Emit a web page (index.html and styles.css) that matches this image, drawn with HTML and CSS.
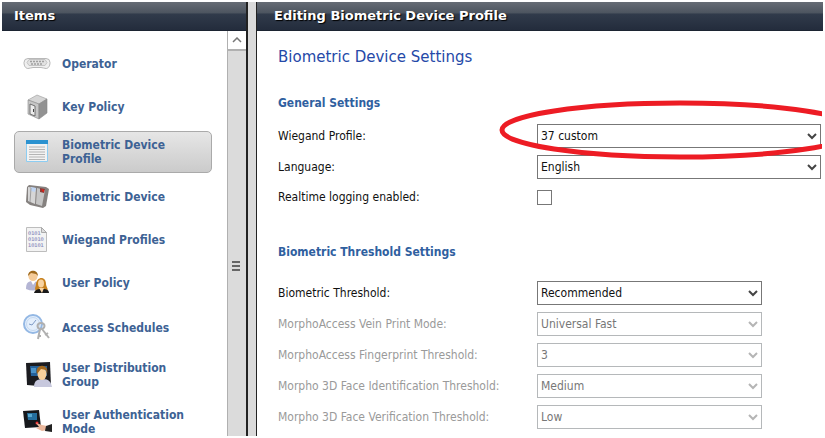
FILE: index.html
```html
<!DOCTYPE html>
<html lang="en">
<head>
  <meta charset="UTF-8">
  <meta name="viewport" content="width=device-width, initial-scale=1.0">
  <title>Editing Biometric Device Profile</title>
  <link rel="stylesheet" href="styles.css">
</head>
<body>
  <div class="app">
    <aside class="sidebar">
      <h2 class="bar">Items</h2>
      <div class="sidebar-body">
        <nav class="items">
          <a class="item" href="#">
            <svg class="icon" viewBox="0 0 30 30">
              <path d="M6 9.500h18q4 0 4 4c0 4-2 6-4 6-2 0-3-1-5-1h-8c-2 0-3 1-5 1-2 0-4-2-4-6q0-4 4-4z" fill="#f0f0f0" stroke="#b8b8b8"/>
              <path d="M7 10.500h16l2 3-2 3H7l-2-3z" fill="#e2e2e2" stroke="#c4c4c4"/>
              <path d="M8 12.500h14M9 15h12" stroke="#a0a0a0" stroke-width="1.500" stroke-dasharray="2 1"/>
            </svg>
            <span>Operator</span>
          </a>
          <a class="item" href="#">
            <svg class="icon" viewBox="0 0 30 30">
              <path d="M6 8l9-5 10 4-8 5z" fill="#d5d5d5" stroke="#999" stroke-width=".6"/>
              <path d="M6 8l11 4v15L6 22z" fill="#c6c6c6" stroke="#888" stroke-width=".6"/>
              <path d="M25 7l-8 5v15l8-6z" fill="#929292" stroke="#888" stroke-width=".6"/>
              <path d="M8 12l5 2v10l-5-2z" fill="#ececec" stroke="#555" stroke-width=".8"/>
              <path d="M11.500 17v3" stroke="#444"/>
            </svg>
            <span>Key Policy</span>
          </a>
          <a class="item selected tall" href="#">
            <svg class="icon" viewBox="0 0 30 30">
              <path d="M4.500 3.500h21v21h-21z" fill="#f2f2f2" stroke="#8dcdf2"/>
              <path d="M4 3h22v4H4z" fill="#2b92d0"/>
              <path d="M7 10h16M7 12.500h16M7 15h16M7 17.500h16M7 20h16M7 22.500h16" stroke="#b4b4b4"/>
            </svg>
            <span>Biometric Device Profile</span>
          </a>
          <a class="item" href="#">
            <svg class="icon" viewBox="0 0 30 30">
              <path d="M7 3l17 2 3 2-3 17-3 2-13-3-4-3 1-15z" fill="#85817f"/>
              <path d="M6 5l8 1-1 16-7-3z" fill="#d6d6d6"/>
              <path d="M15 6l8 2-3 16-6-2z" fill="#c6c6c6"/>
              <path d="M9 5l5 1-1 4-4-1z" fill="#bfd5f4"/>
              <path d="M18 6l5 1-1 4-4-1z" fill="#8d3a35"/>
              <path d="M20 7l2 1v2l-2-1z" fill="#e02018"/>
              <path d="M9 6L8 20" stroke="#a0a0a0" fill="none"/>
            </svg>
            <span>Biometric Device</span>
          </a>
          <a class="item" href="#">
            <svg class="icon" viewBox="0 0 30 30">
              <path d="M4.500 2.500h15l5 5v19h-20z" fill="#f3f3f3" stroke="#bdbdbd"/>
              <path d="M19.500 2.500v5h5z" fill="#ddd" stroke="#aaa"/>
              <g class="digits">
                <text x="6" y="10">0101</text>
                <text x="6" y="16">01010</text>
                <text x="6" y="22">10101</text>
              </g>
            </svg>
            <span>Wiegand Profiles</span>
          </a>
          <a class="item" href="#">
            <svg class="icon" viewBox="0 0 30 30">
              <path d="M4 21c0-6 2-8 7-8s7 3 7 8q-7 3-14 0z" fill="#b4b5d4"/>
              <path d="M9 13l2 4 3-4z" fill="#fff"/>
              <circle cx="11" cy="8.500" r="4.500" fill="#f5cb98"/>
              <path d="M6 8c0-7 10-7 10 0l-2-2-5-1-2 2z" fill="#a06a1c"/>
              <path d="M14 23c-2-3 0-4 0-7 1-8 10-8 10 0 0 3 3 5 1 7z" fill="#c8821f"/>
              <ellipse cx="19" cy="15.500" rx="3" ry="4" fill="#f8d3a2"/>
              <path d="M12 25c1-4 5-4 8-4s7 0 7 4z" fill="#191919"/>
              <path d="M17 20h5l-2 5z" fill="#f8d3a2"/>
            </svg>
            <span>User Policy</span>
          </a>
          <a class="item tall" href="#">
            <svg class="icon" viewBox="0 0 30 30">
              <circle cx="11" cy="11" r="9" fill="#e4effc" stroke="#94b8e4" stroke-width="2"/>
              <circle cx="11" cy="11" r="6.500" fill="none" stroke="#c4d8f0"/>
              <path d="M14 7l-4 5-3-1" fill="none" stroke="#7f9bc6"/>
              <g fill="none" stroke="#b0b0b0" stroke-width="2">
                <ellipse cx="19" cy="13" rx="3.500" ry="3"/>
                <path d="M18 16l-2 10M16 23h3M20 16l7 9M23 22l3-2"/>
              </g>
            </svg>
            <span>Access Schedules</span>
          </a>
          <a class="item tall" href="#">
            <svg class="icon" viewBox="0 0 30 30">
              <path d="M4 3l24-1 1 24-1 1-23-2z" fill="#1b1c20"/>
              <path d="M8 6h17v10H9z" fill="#24619a"/>
              <path d="M9 8h5v5H9z" fill="#4b93c8"/>
              <path d="M12 27c0-6 3-8 9-8s8 3 9 8z" fill="#c7c8dd"/>
              <ellipse cx="20" cy="14" rx="4.500" ry="6" fill="#f6d09c"/>
              <path d="M15 14c-3-11 13-11 10 0l-1-4-5-1z" fill="#a5691d"/>
            </svg>
            <span>User Distribution Group</span>
          </a>
          <a class="item tall" href="#">
            <svg class="icon" viewBox="0 0 30 30">
              <path d="M1 4l16-1 2 17-16 1z" fill="#16181b"/>
              <path d="M5 6h10v7H6z" fill="#246e9d"/>
              <path d="M6 7h4v3H6z" fill="#58a9cf"/>
              <circle cx="15" cy="16" r="1.500" fill="#e33"/>
              <path d="M14 16l6 2 5 1v4l-5 1-6-3 3-1z" fill="#eab79c"/>
              <path d="M24 19l6-2v8l-7-1z" fill="#222"/>
            </svg>
            <span>User Authentication Mode</span>
          </a>
        </nav>
        <div class="scrollbar">
          <button class="scroll-up" aria-label="Scroll up">
            <svg viewBox="0 0 10 6"><path d="M1 5l4-4 4 4"/></svg>
          </button>
          <div class="track">
            <div class="grip"></div>
          </div>
        </div>
      </div>
    </aside>
    <div class="splitter"></div>
    <main class="content">
      <h1 class="bar">Editing Biometric Device Profile</h1>
      <form class="form">
        <h2 class="title">Biometric Device Settings</h2>
        <h3 class="group">General Settings</h3>
        <div class="row">
          <label for="wiegand">Wiegand Profile:</label>
          <div class="field wide">
            <select id="wiegand"><option>37 custom</option></select>
            <svg class="chevron" viewBox="0 0 10 8"><path d="M1 1l4 4 4-4"/></svg>
            <svg class="marker" viewBox="0 0 324 62"><ellipse cx="182" cy="31" rx="178" ry="27"/></svg>
          </div>
        </div>
        <div class="row">
          <label for="language">Language:</label>
          <div class="field wide">
            <select id="language"><option>English</option></select>
            <svg class="chevron" viewBox="0 0 10 8"><path d="M1 1l4 4 4-4"/></svg>
          </div>
        </div>
        <div class="row check">
          <label for="logging">Realtime logging enabled:</label>
          <input type="checkbox" id="logging">
        </div>
        <h3 class="group threshold">Biometric Threshold Settings</h3>
        <div class="row">
          <label for="threshold">Biometric Threshold:</label>
          <div class="field">
            <select id="threshold"><option>Recommended</option></select>
            <svg class="chevron" viewBox="0 0 10 8"><path d="M1 1l4 4 4-4"/></svg>
          </div>
        </div>
        <div class="row off">
          <label for="vein">MorphoAccess Vein Print Mode:</label>
          <div class="field">
            <select id="vein" disabled><option>Universal Fast</option></select>
            <svg class="chevron" viewBox="0 0 10 8"><path d="M1 1l4 4 4-4"/></svg>
          </div>
        </div>
        <div class="row off">
          <label for="finger">MorphoAccess Fingerprint Threshold:</label>
          <div class="field">
            <select id="finger" disabled><option>3</option></select>
            <svg class="chevron" viewBox="0 0 10 8"><path d="M1 1l4 4 4-4"/></svg>
          </div>
        </div>
        <div class="row off">
          <label for="face-id">Morpho 3D Face Identification Threshold:</label>
          <div class="field">
            <select id="face-id" disabled><option>Medium</option></select>
            <svg class="chevron" viewBox="0 0 10 8"><path d="M1 1l4 4 4-4"/></svg>
          </div>
        </div>
        <div class="row off">
          <label for="face-verify">Morpho 3D Face Verification Threshold:</label>
          <div class="field">
            <select id="face-verify" disabled><option>Low</option></select>
            <svg class="chevron" viewBox="0 0 10 8"><path d="M1 1l4 4 4-4"/></svg>
          </div>
        </div>
      </form>
    </main>
  </div>
</body>
</html>
```
FILE: styles.css
```css
* {
  box-sizing: border-box;
}

body {
  margin: 0;
  padding: 2px;
  height: 100vh;
  overflow: hidden;
  background: #fff;
  font-family: Tahoma, "DejaVu Sans Condensed", "DejaVu Sans", sans-serif;
  font-size: 12px;
}

.app {
  display: flex;
  height: 100%;
}

.sidebar {
  display: flex;
  flex-direction: column;
  flex: 0 0 244px;
}

.bar {
  flex: none;
  margin: 0;
  height: 29px;
  padding: 0 0 0 12px;
  background: linear-gradient(#666c75 0, #4c545f 40%, #313b4b 42%, #232c3c 100%);
  border-bottom: 1px solid #1c2432;
  color: #fff;
  font: bold 13px/27px Verdana, "DejaVu Sans", sans-serif;
  text-shadow: 1px 1px 1px #000;
  white-space: nowrap;
}

.sidebar-body {
  display: flex;
  flex: 1;
  min-height: 0;
}

.items {
  display: flex;
  flex-direction: column;
  flex: 1;
  gap: 1px;
  padding: 12px 15px 0 12px;
  overflow: hidden;
}

.item {
  display: flex;
  flex: none;
  align-items: center;
  gap: 10px;
  height: 42px;
  padding: 0 24px 0 7px;
  border: 1px solid transparent;
  border-radius: 5px;
  color: #3d6294;
  font-weight: bold;
  line-height: 14px;
  text-decoration: none;
}

.item.tall {
  margin: 2px 0;
}

.item.selected {
  background: linear-gradient(#e6e6e6, #cbcbcb);
  border-color: #aaa;
}

.icon {
  flex: none;
  width: 30px;
  height: 30px;
}

.digits {
  fill: #9a9cc6;
  font: bold 5px "DejaVu Sans Condensed", sans-serif;
}

.scrollbar {
  display: flex;
  flex-direction: column;
  width: 19px;
  background: #dbdbdb;
  border-left: 1px solid #b0b0b0;
}

.scroll-up {
  width: 18px;
  height: 20px;
  padding: 0 4px;
  border: 0;
  border-bottom: 2px solid #b0b0b0;
  background: #fff;
}

.scroll-up svg {
  display: block;
  width: 10px;
  height: 6px;
  fill: none;
  stroke: #777;
  stroke-width: 1.5;
}

.track {
  display: grid;
  flex: 1;
  grid-template-rows: 9fr 11px 7fr;
}

.grip {
  grid-row: 2;
  width: 8px;
  margin-left: 4px;
  background: repeating-linear-gradient(#666 0 2px, #dbdbdb 2px 4px);
}

.splitter {
  flex: 0 0 11px;
  background: #dadada;
  border: solid #222;
  border-width: 0 1px 0 2px;
}

.content {
  flex: 1;
  min-width: 0;
}

.content .bar {
  padding-left: 17px;
}

.form {
  padding: 15px 2px 0 21px;
}

.title {
  margin: 0 0 27px;
  color: #2549a8;
  font: 15px/22px Verdana, "DejaVu Sans", sans-serif;
}

.group {
  margin: 0 0 13px;
  color: #2f609f;
  font-size: 12px;
  line-height: 16px;
}

.group.threshold {
  margin: 36px 0 21px;
}

.row {
  display: grid;
  grid-template-columns: 259px 1fr;
  align-items: center;
  height: 24px;
  margin-bottom: 7px;
  color: #111;
}

.row.check {
  height: 22px;
}

.field {
  position: relative;
  width: 225px;
}

.field.wide {
  width: auto;
}

select {
  appearance: none;
  display: block;
  width: 100%;
  height: 24px;
  padding: 0 24px 0 3px;
  border: 1px solid #777;
  border-radius: 0;
  background: #fff;
  color: #111;
  font: inherit;
}

.chevron {
  position: absolute;
  top: 9px;
  right: 4px;
  width: 10px;
  height: 8px;
  fill: none;
  stroke: #444;
  stroke-width: 2;
  pointer-events: none;
}

.marker {
  position: absolute;
  z-index: 1;
  top: -25px;
  left: -39px;
  width: 324px;
  height: 62px;
  fill: none;
  stroke: #ed1c24;
  stroke-width: 5;
  pointer-events: none;
}

input[type="checkbox"] {
  appearance: none;
  width: 15px;
  height: 15px;
  margin: 0;
  border: 1px solid #777;
  background: #fff;
}

.off {
  color: #9a9a9a;
}

.off select {
  border-color: #b5b8ba;
  color: #777;
  opacity: 1;
}

.off .chevron {
  stroke: #b5b5b5;
}
```
